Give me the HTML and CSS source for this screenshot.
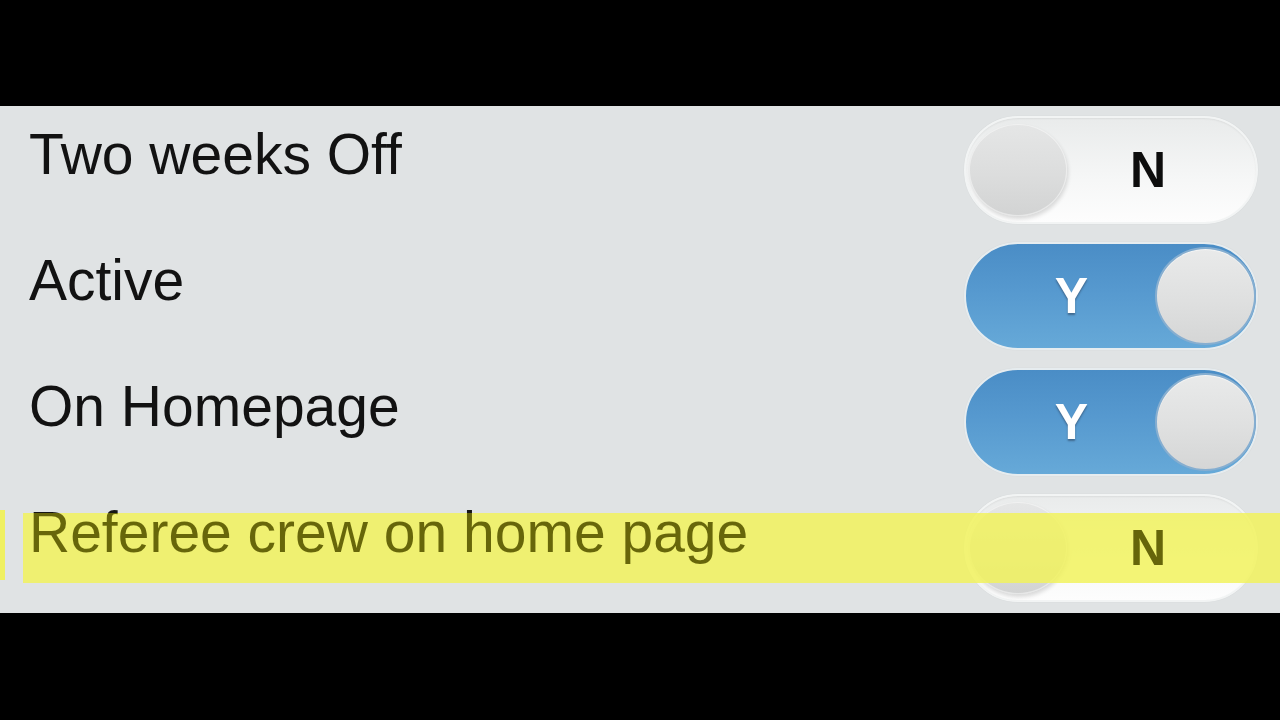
FILE: index.html
```html
<!DOCTYPE html>
<html lang="en">
<head>
<meta charset="utf-8">
<title>Settings toggles</title>
<link rel="stylesheet" href="styles.css">
</head>
<body>
<div class="screen">
  <div class="bar bar-top"></div>
  <section class="panel">
    <div class="row">
      <span class="label">Two weeks Off</span>
      <div class="toggle off"><span class="knob"></span><span class="tlabel">N</span></div>
    </div>
    <div class="row">
      <span class="label">Active</span>
      <div class="toggle on"><span class="tlabel">Y</span><span class="knob"></span></div>
    </div>
    <div class="row">
      <span class="label">On Homepage</span>
      <div class="toggle on"><span class="tlabel">Y</span><span class="knob"></span></div>
    </div>
    <div class="row row-hl">
      <span class="label label-hl">Referee crew on home page</span>
      <div class="toggle off"><span class="knob"></span><span class="tlabel tlabel-hl">N</span></div>
      <div class="hl-strip"></div>
      <div class="hl-band"></div>
    </div>
  </section>
  <div class="bar bar-bottom"></div>
</div>
</body>
</html>
```

FILE: styles.css
```css
* { box-sizing: border-box; }
html, body { margin: 0; padding: 0; }
body {
  background: #000;
  font-family: "Liberation Sans", Arial, sans-serif;
  width: 1280px;
  height: 720px;
  overflow: hidden;
}
.screen {
  display: flex;
  flex-direction: column;
  height: 720px;
}
.bar { background: #000; }
.bar-top { height: 106px; flex: none; }
.bar-bottom { flex: 1; }
.panel {
  height: 507px;
  flex: none;
  background: #e0e3e4;
  padding-top: 1px;
  display: flex;
  flex-direction: column;
}
.row {
  position: relative;
  height: 126px;
  flex: none;
  display: flex;
  justify-content: space-between;
  align-items: center;
  padding: 0 22px 0 29px;
}
.label {
  align-self: flex-start;
  padding-top: 15px;
  font-size: 57px;
  line-height: 64px;
  color: #121212;
  position: relative;
  z-index: 2;
}
.label-hl {
  background: linear-gradient(to bottom, #151515 0, #151515 28px, #67660a 28px, #67660a 100%);
  -webkit-background-clip: text;
  background-clip: text;
  color: transparent;
}
.toggle {
  width: 294px;
  height: 108px;
  border-radius: 54px;
  display: flex;
  align-items: center;
  border: 2px solid #f2f4f4;
}
.toggle.off {
  background: linear-gradient(to bottom, #e9ebeb 0%, #f6f7f7 60%, #fdfdfd 100%);
  box-shadow: 0 0 1px rgba(0,0,0,0.12), inset 0 1px 2px rgba(0,0,0,0.06);
  padding-left: 3px;
}
.toggle.on {
  background: linear-gradient(to bottom, #4a8dc6 0%, #5699cf 45%, #66a9d8 100%);
  border-color: #e6ecef;
  box-shadow: 0 0 1px rgba(0,0,0,0.12);
}
.knob {
  flex: none;
  width: 98px;
  height: 92px;
  border-radius: 50%;
  background: linear-gradient(to bottom, #e5e6e6 0%, #dcdddd 55%, #d2d3d3 100%);
  box-shadow: 1px 3px 4px rgba(0,0,0,0.14), inset 0 0 0 1px rgba(255,255,255,0.45);
}
.toggle.on .knob {
  width: 101px;
  height: 98px;
  border: 2px solid #86aed0;
  background: linear-gradient(to bottom, #e9eaea 0%, #dfe0e0 55%, #d5d6d6 100%);
  box-shadow: inset 0 1px 1px rgba(255,255,255,0.6);
}
.tlabel {
  flex: 1;
  text-align: center;
  font-weight: bold;
  font-size: 50px;
  line-height: 1;
  position: relative;
  z-index: 2;
}
.toggle.off .tlabel {
  color: #0d0d0d;
  padding-right: 27px;
}
.toggle.on .tlabel {
  color: #ffffff;
  padding-left: 22px;
  text-shadow: 0 2px 2px rgba(30,40,60,0.45);
}
.toggle.off .tlabel-hl { color: #66650a; }
.hl-band {
  position: absolute;
  left: 23px;
  right: 0;
  top: 28px;
  height: 70px;
  background: rgba(242, 243, 88, 0.82);
  z-index: 1;
}
.hl-strip {
  position: absolute;
  left: 0;
  width: 5px;
  top: 25px;
  height: 70px;
  background: #eff061;
  z-index: 1;
}
```
